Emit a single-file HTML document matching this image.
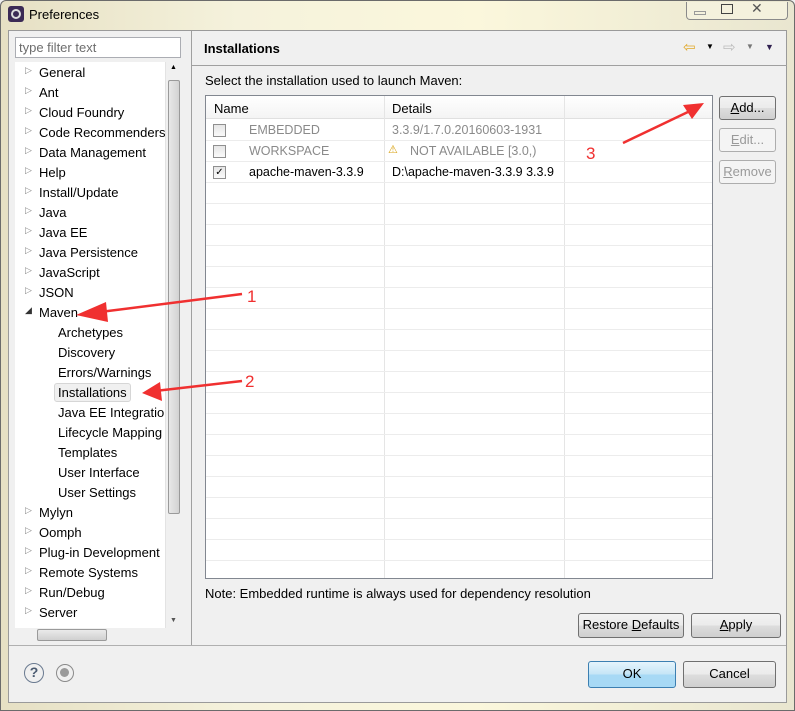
<!DOCTYPE html>
<html><head><style>
*{box-sizing:border-box;margin:0;padding:0}
body{width:795px;height:711px;overflow:hidden;font-family:"Liberation Sans",sans-serif;font-size:12.5px;color:#000;background:#f0f0f0;position:relative}
.abs{position:absolute}
.frame{left:0;top:0;width:795px;height:711px;background:linear-gradient(90deg,#e6e0c4,#f5f2dc 30%,#fbf7dc 60%,#e9e6d0);border:1px solid #6b6b6b;border-radius:6px 6px 0 0}
.client{left:8px;top:30px;width:779px;height:673px;background:#f0f0f0;border:1px solid #9a9a9a}
.tree{left:15px;top:62px;width:165px;height:580px;background:#fff}
.ti{position:absolute;left:24px;font-size:13px;white-space:nowrap}
.ch{left:43px}
.arr{position:absolute;left:10px;font-size:9px;color:#8a8a8a}
.btn{position:absolute;border:1px solid #707070;border-radius:3px;background:linear-gradient(#f2f2f2,#ebebeb 50%,#dddddd 51%,#cfcfcf);text-align:center;font-size:13px;line-height:22px}
.dis{border-color:#adadad;color:#9a9a9a;background:#f4f4f4}
.row{position:absolute;left:0;width:506px;height:21px;border-bottom:1px solid #ececec}
.cb{position:absolute;left:7px;top:4px;width:13px;height:13px;border:1px solid #8f8f8f;background:linear-gradient(#e6e6e6,#fafafa)}
</style></head><body>
<div class="abs frame"></div>
<div class="abs" style="left:8px;top:6px;width:16px;height:16px;border-radius:3px;background:#3b2a55"><div style="margin:3px;width:10px;height:10px;border-radius:50%;border:2px solid #ddd"></div></div>
<div class="abs" style="left:29px;top:7px;font-size:13px">Preferences</div>
<div class="abs" style="left:686px;top:2px;width:102px;height:18px;border:1px solid #8a8a8a;border-top:none;border-radius:0 0 4px 4px;background:#f4f1dd"></div>
<div class="abs" style="left:694px;top:11px;width:12px;height:4px;border:1px solid #999"></div>
<div class="abs" style="left:721px;top:4px;width:12px;height:10px;border:1px solid #444"></div>
<div class="abs" style="left:751px;top:0px;font-size:14px;color:#555">✕</div>
<div class="abs client"></div>
<div class="abs" style="left:15px;top:37px;width:166px;height:21px;border:1px solid #abadb3;background:#fff;color:#6d6d6d;padding:2px 3px;font-size:13px">type filter text</div>
<div class="abs tree">
<div class="ti" style="top:3px"><span class="arr" style="left:-14px">▷</span>General</div>
<div class="ti" style="top:23px"><span class="arr" style="left:-14px">▷</span>Ant</div>
<div class="ti" style="top:43px"><span class="arr" style="left:-14px">▷</span>Cloud Foundry</div>
<div class="ti" style="top:63px"><span class="arr" style="left:-14px">▷</span>Code Recommenders</div>
<div class="ti" style="top:83px"><span class="arr" style="left:-14px">▷</span>Data Management</div>
<div class="ti" style="top:103px"><span class="arr" style="left:-14px">▷</span>Help</div>
<div class="ti" style="top:123px"><span class="arr" style="left:-14px">▷</span>Install/Update</div>
<div class="ti" style="top:143px"><span class="arr" style="left:-14px">▷</span>Java</div>
<div class="ti" style="top:163px"><span class="arr" style="left:-14px">▷</span>Java EE</div>
<div class="ti" style="top:183px"><span class="arr" style="left:-14px">▷</span>Java Persistence</div>
<div class="ti" style="top:203px"><span class="arr" style="left:-14px">▷</span>JavaScript</div>
<div class="ti" style="top:223px"><span class="arr" style="left:-14px">▷</span>JSON</div>
<div class="ti" style="top:243px"><span class="arr" style="left:-14px;color:#333">◢</span>Maven</div>
<div class="ti ch" style="top:263px">Archetypes</div>
<div class="ti ch" style="top:283px">Discovery</div>
<div class="ti ch" style="top:303px">Errors/Warnings</div>
<div class="ti ch" style="top:321px;left:39px;padding:1px 3px;border:1px solid #d6d6d6;border-radius:3px;background:#f0f0f0">Installations</div>
<div class="ti ch" style="top:343px">Java EE Integration</div>
<div class="ti ch" style="top:363px">Lifecycle Mapping</div>
<div class="ti ch" style="top:383px">Templates</div>
<div class="ti ch" style="top:403px">User Interface</div>
<div class="ti ch" style="top:423px">User Settings</div>
<div class="ti" style="top:443px"><span class="arr" style="left:-14px">▷</span>Mylyn</div>
<div class="ti" style="top:463px"><span class="arr" style="left:-14px">▷</span>Oomph</div>
<div class="ti" style="top:483px"><span class="arr" style="left:-14px">▷</span>Plug-in Development</div>
<div class="ti" style="top:503px"><span class="arr" style="left:-14px">▷</span>Remote Systems</div>
<div class="ti" style="top:523px"><span class="arr" style="left:-14px">▷</span>Run/Debug</div>
<div class="ti" style="top:543px"><span class="arr" style="left:-14px">▷</span>Server</div>
<div class="abs" style="left:150px;top:0;width:16px;height:566px;background:#f0f0f0;border-left:1px solid #e3e3e3"><div style="position:absolute;left:2px;top:18px;width:12px;height:434px;border:1px solid #9a9a9a;border-radius:2px;background:linear-gradient(90deg,#e8e8e8,#d2d2d2)"></div><div style="position:absolute;top:2px;left:4px;font-size:7px">▲</div><div style="position:absolute;bottom:4px;left:4px;font-size:7px;color:#555">▼</div></div>
<div class="abs" style="left:0;top:566px;width:166px;height:14px;background:#f0f0f0"><div style="position:absolute;left:22px;top:1px;width:70px;height:12px;border:1px solid #9a9a9a;border-radius:2px;background:linear-gradient(#eaeaea,#d0d0d0)"></div></div>
</div>
<div class="abs" style="left:191px;top:31px;width:1px;height:614px;background:#a0a0a0"></div>
<div class="abs" style="left:204px;top:41px;font-size:13px;font-weight:bold">Installations</div>
<div class="abs" style="left:683px;top:38px;color:#e1a92a;font-size:15px">⇦</div>
<div class="abs" style="left:706px;top:42px;font-size:8px">▼</div>
<div class="abs" style="left:723px;top:38px;color:#bbb;font-size:15px">⇨</div>
<div class="abs" style="left:746px;top:42px;font-size:8px;color:#777">▼</div>
<div class="abs" style="left:765px;top:42px;font-size:9px;color:#302050">▼</div>
<div class="abs" style="left:192px;top:65px;width:595px;height:1px;background:#a0a0a0"></div>
<div class="abs" style="left:205px;top:73px;font-size:13px">Select the installation used to launch Maven:</div>
<div class="abs" style="left:205px;top:95px;width:508px;height:484px;border:1px solid #828790;background:#fff">
<div style="position:absolute;left:0;top:0;width:506px;height:23px;background:linear-gradient(#fff,#f4f4f4);border-bottom:1px solid #e0e0e0"></div>
<div style="position:absolute;left:178px;top:0;width:1px;height:482px;background:#e5e5e5"></div>
<div style="position:absolute;left:358px;top:0;width:1px;height:482px;background:#e5e5e5"></div>
<div style="position:absolute;left:8px;top:5px;font-size:13px">Name</div>
<div style="position:absolute;left:186px;top:5px;font-size:13px">Details</div>
<div class="row" style="top:24px"><div class="cb"></div><span style="position:absolute;left:43px;top:3px;color:#8a8a8a">EMBEDDED</span><span style="position:absolute;left:186px;top:3px;color:#8a8a8a">3.3.9/1.7.0.20160603-1931</span></div>
<div class="row" style="top:45px"><div class="cb"></div><span style="position:absolute;left:43px;top:3px;color:#8a8a8a">WORKSPACE</span><span style="position:absolute;left:182px;top:2px;color:#d8a010;font-size:11px">⚠</span><span style="position:absolute;left:204px;top:3px;color:#8a8a8a">NOT AVAILABLE [3.0,)</span></div>
<div class="row" style="top:66px"><div class="cb" style="font-size:10px;line-height:11px;text-align:center">✓</div><span style="position:absolute;left:43px;top:3px">apache-maven-3.3.9</span><span style="position:absolute;left:186px;top:3px">D:\apache-maven-3.3.9 3.3.9</span></div>
<div class="row" style="top:87px"></div><div class="row" style="top:108px"></div><div class="row" style="top:129px"></div><div class="row" style="top:150px"></div><div class="row" style="top:171px"></div><div class="row" style="top:192px"></div><div class="row" style="top:213px"></div><div class="row" style="top:234px"></div><div class="row" style="top:255px"></div><div class="row" style="top:276px"></div><div class="row" style="top:297px"></div><div class="row" style="top:318px"></div><div class="row" style="top:339px"></div><div class="row" style="top:360px"></div><div class="row" style="top:381px"></div><div class="row" style="top:402px"></div><div class="row" style="top:423px"></div><div class="row" style="top:444px"></div>
</div>
<div class="btn" style="left:719px;top:96px;width:57px;height:24px"><u>A</u>dd...</div>
<div class="btn dis" style="left:719px;top:128px;width:57px;height:24px"><u>E</u>dit...</div>
<div class="btn dis" style="left:719px;top:160px;width:57px;height:24px"><u>R</u>emove</div>
<div class="abs" style="left:205px;top:586px;font-size:13px">Note: Embedded runtime is always used for dependency resolution</div>
<div class="btn" style="left:578px;top:613px;width:106px;height:25px">Restore <u>D</u>efaults</div>
<div class="btn" style="left:691px;top:613px;width:90px;height:25px"><u>A</u>pply</div>
<div class="abs" style="left:9px;top:645px;width:777px;height:1px;background:#b0b0b0"></div>
<div class="abs" style="left:24px;top:663px;width:20px;height:20px;border:1.5px solid #6a7a90;border-radius:50%;text-align:center;font-weight:bold;color:#4a5a70;line-height:17px;font-size:14px">?</div>
<div class="abs" style="left:56px;top:664px;width:18px;height:18px;border:1.5px solid #8a8a8a;border-radius:50%;background:#f0f0f0"><div style="margin:3px;width:9px;height:9px;border-radius:50%;background:#9a9a9a"></div></div>
<div class="btn" style="left:588px;top:661px;width:88px;height:27px;line-height:24px;border-color:#3c7fb1;background:linear-gradient(#e5f4fc,#c4e5f6 50%,#a7d9f5 51%,#a7d9f5)">OK</div>
<div class="btn" style="left:683px;top:661px;width:93px;height:27px;line-height:24px">Cancel</div>
<svg class="abs" style="left:0;top:0" width="795" height="711">
<g fill="#f03030" stroke="#f03030">
<line x1="242" y1="294" x2="100" y2="312" stroke-width="2.5"/><polygon points="76,315 106,302 108,322" stroke="none"/>
<line x1="242" y1="381" x2="155" y2="391" stroke-width="2.5"/><polygon points="142,393 160,382 162,401" stroke="none"/>
<line x1="623" y1="143" x2="690" y2="111" stroke-width="2.5"/><polygon points="704,103 683,105 692,119" stroke="none"/>
</g>
<g fill="#f03030" font-family="Liberation Sans" font-size="17">
<text x="247" y="302">1</text><text x="245" y="387">2</text><text x="586" y="159">3</text></g>
</svg>
</body></html>
